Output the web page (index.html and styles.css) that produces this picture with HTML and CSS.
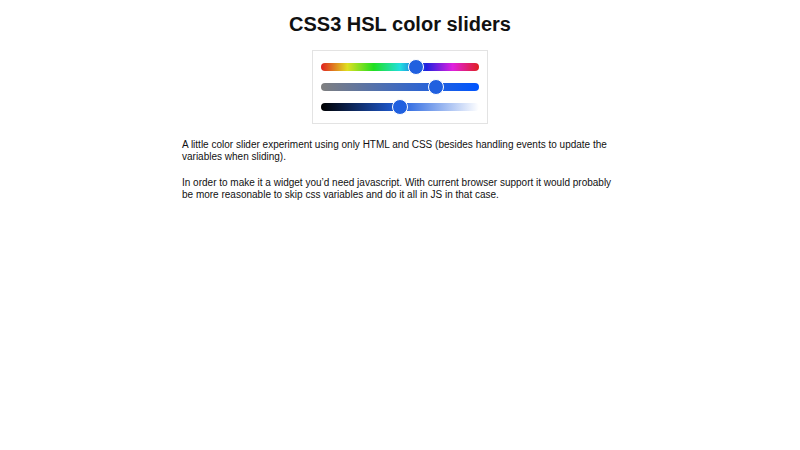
FILE: index.html
```html
<!DOCTYPE html>
<html lang="en">
<head>
<meta charset="utf-8">
<title>CSS3 HSL color sliders</title>
<link rel="stylesheet" href="styles.css">
</head>
<body>
  <main class="page">
    <h1 class="title">CSS3 HSL color sliders</h1>
    <div class="picker" id="picker">
      <input class="slider slider-hue" type="range" min="0" max="360" value="220" data-var="--h" data-unit="">
      <input class="slider slider-sat" type="range" min="0" max="100" value="75" data-var="--s" data-unit="%">
      <input class="slider slider-light" type="range" min="0" max="100" value="50" data-var="--l" data-unit="%">
    </div>
    <div class="text">
      <p>A little color slider experiment using only HTML and CSS (besides handling events to update the variables when sliding).</p>
      <p>In order to make it a widget you’d need javascript. With current browser support it would probably be more reasonable to skip css variables and do it all in JS in that case.</p>
    </div>
  </main>
  <script src="script.js"></script>
</body>
</html>
```
FILE: styles.css
```css
html, body {
  margin: 0;
  background: #fff;
}

body {
  font-family: "Liberation Sans", Arial, sans-serif;
  color: #111;
}

.page {
  display: flex;
  flex-direction: column;
  align-items: center;
  padding-top: 13px;
}

.title {
  margin: 0 0 14px;
  font-size: 20px;
  font-weight: bold;
  line-height: 23px;
}

/* picker box */
.picker {
  --h: 220;
  --s: 75%;
  --l: 50%;
  display: flex;
  flex-direction: column;
  gap: 4px;
  padding: 8px;
  border: 1px solid #e3e3e3;
}

.slider {
  -webkit-appearance: none;
  appearance: none;
  display: block;
  width: 158px;
  height: 16px;
  margin: 0;
  background: transparent;
  outline: none;
}

.slider::-webkit-slider-runnable-track {
  height: 8px;
  border-radius: 4px;
}

.slider::-webkit-slider-thumb {
  -webkit-appearance: none;
  appearance: none;
  box-sizing: border-box;
  width: 16px;
  height: 16px;
  margin-top: -4px;
  border-radius: 50%;
  border: 1.5px solid #fff;
  background: hsl(var(--h), var(--s), var(--l));
}

.slider-hue::-webkit-slider-runnable-track {
  background: linear-gradient(to right,
    hsl(0, var(--s), var(--l)),
    hsl(60, var(--s), var(--l)),
    hsl(120, var(--s), var(--l)),
    hsl(180, var(--s), var(--l)),
    hsl(240, var(--s), var(--l)),
    hsl(300, var(--s), var(--l)),
    hsl(360, var(--s), var(--l)));
}

.slider-sat::-webkit-slider-runnable-track {
  background: linear-gradient(to right,
    hsl(var(--h), 0%, var(--l)),
    hsl(var(--h), 100%, var(--l)));
}

.slider-light::-webkit-slider-runnable-track {
  background: linear-gradient(to right,
    hsl(var(--h), var(--s), 0%),
    hsl(var(--h), var(--s), 50%),
    hsl(var(--h), var(--s), 100%));
}

/* description */
.text {
  width: 438px;
  padding-left: 2px;
  font-size: 10px;
  line-height: 11.5px;
}

.text p {
  margin: 15px 0 0;
}
```
FILE: script.js
```js
// Push each slider's value into the matching CSS variable on the picker.
var picker = document.getElementById('picker');
picker.querySelectorAll('.slider').forEach(function (input) {
  input.addEventListener('input', function () {
    picker.style.setProperty(input.dataset.var, input.value + input.dataset.unit);
  });
});
```
